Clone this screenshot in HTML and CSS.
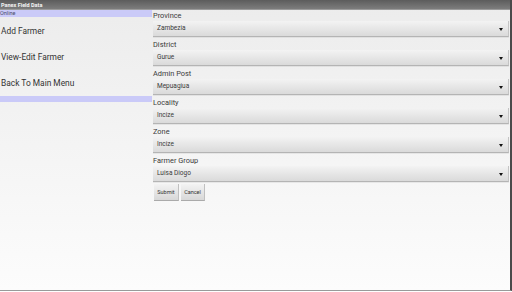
FILE: index.html
```html
<!DOCTYPE html>
<html lang="en">
<head>
    <meta charset="UTF-8">
    <title>Panex Field Data</title>
    <link rel="stylesheet" href="styles.css">
</head>
<body>
    <div class="screen">
        <div class="titlebar">Panex Field Data</div>
        <div class="main">
            <div class="sidebar">
                <div class="status">Online</div>
                <div class="menu">
                    <div class="menu-item">Add Farmer</div>
                    <div class="menu-item">View-Edit Farmer</div>
                    <div class="menu-item">Back To Main Menu</div>
                </div>
                <div class="status-bar"></div>
            </div>

            <div class="form">
                <div class="field-label">Province</div>
                <div class="spinner">Zambezia</div>

                <div class="field-label">District</div>
                <div class="spinner">Gurue</div>

                <div class="field-label">Admin Post</div>
                <div class="spinner">Mepuagiua</div>

                <div class="field-label">Locality</div>
                <div class="spinner">Incize</div>

                <div class="field-label">Zone</div>
                <div class="spinner">Incize</div>

                <div class="field-label">Farmer Group</div>
                <div class="spinner">Luisa Diogo</div>

                <div class="buttons">
                    <button class="btn btn-submit">Submit</button>
                    <button class="btn btn-cancel">Cancel</button>
                </div>
            </div>
        </div>
    </div>
</body>
</html>
```

FILE: styles.css
```css
html, body {
    margin: 0;
    padding: 0;
    background-color: #fff;
}
body {
    width: 512px;
    height: 292px;
    overflow: hidden;
    font-family: Roboto, 'Liberation Sans', sans-serif;
    color: #222;
}
.screen {
    box-sizing: border-box;
    width: 512px;
    height: 291px;
    border-right: 2px solid #4a4a4a;
    border-bottom: 1px solid #9a9a9a;
    background: linear-gradient(#ececec, #fcfcfc);
    display: flex;
    flex-direction: column;
}
.titlebar {
    height: 10px;
    line-height: 10px;
    padding-left: 1px;
    font-size: 5.5px;
    font-weight: bold;
    color: #f4f4f4;
    background: linear-gradient(#5c5c5c, #7c7c7c);
    border-bottom: 1px solid #9a9a9a;
    box-sizing: border-box;
}
.main {
    display: flex;
    flex: 1;
}
.sidebar {
    width: 152px;
    flex-shrink: 0;
}
.status {
    height: 7px;
    line-height: 7px;
    font-size: 5.5px;
    color: #4a4a6a;
    background-color: #cacaf8;
}
.menu {
    padding-top: 1px;
}
.menu-item {
    height: 26px;
    line-height: 26px;
    padding-left: 1px;
    font-size: 8.4px;
    color: #333;
}
.status-bar {
    height: 6px;
    background-color: #cacaf8;
}
.form {
    flex: 1;
    padding-left: 1px;
    padding-right: 1px;
}
.field-label {
    height: 11px;
    line-height: 12px;
    font-size: 7.4px;
    color: #3a3a3a;
}
.spinner {
    position: relative;
    box-sizing: border-box;
    height: 16px;
    line-height: 15px;
    margin-bottom: 2px;
    padding-left: 4px;
    font-size: 6.5px;
    color: #3a3a3a;
    background: linear-gradient(#f3f3f3, #dadada);
    border-bottom: 1px solid #b4b4b4;
    border-right: 1px solid #c4c4c4;
    box-shadow: 0 1px 0 rgba(0, 0, 0, 0.06);
}
.spinner::after {
    content: '';
    position: absolute;
    right: 5px;
    top: 7px;
    border-left: 2.5px solid transparent;
    border-right: 2.5px solid transparent;
    border-top: 3px solid #111;
}
.buttons {
    display: flex;
    gap: 2px;
    margin-top: 1px;
    padding-left: 1px;
}
.btn {
    box-sizing: border-box;
    height: 17px;
    padding: 0;
    font-family: Roboto, 'Liberation Sans', sans-serif;
    font-size: 5.5px;
    color: #333;
    background: linear-gradient(#f3f3f3, #d8d8d8);
    border: none;
    border-bottom: 1px solid #aaa;
    border-right: 1px solid #c0c0c0;
}
.btn-submit {
    width: 25px;
}
.btn-cancel {
    width: 24px;
}
```
